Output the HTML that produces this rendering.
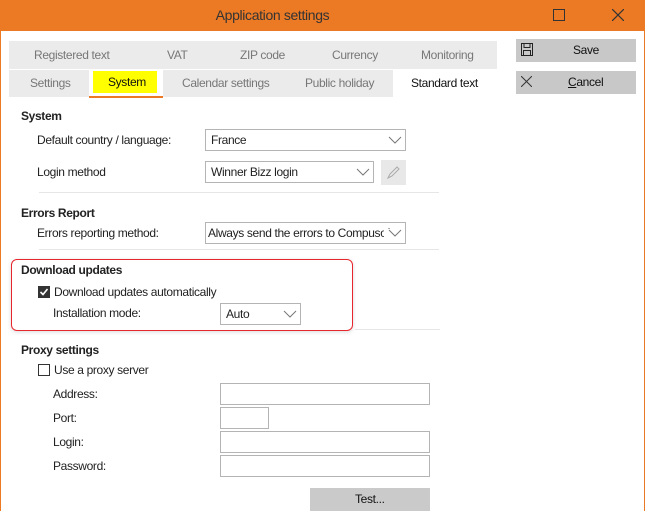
<!DOCTYPE html><html><head><style>
body{margin:0;width:645px;height:511px;overflow:hidden;background:#fff;font-family:"Liberation Sans",sans-serif;font-size:12px;letter-spacing:-0.35px;color:#222;position:relative}
.a{position:absolute}
.t{position:absolute;white-space:nowrap}
.dd{position:absolute;border:1px solid #b4b4b4;background:#fff;box-sizing:border-box;padding-left:5px;line-height:20px;font-size:12px;overflow:hidden;white-space:nowrap}
.dd svg{position:absolute;right:3px;top:6px}
.in{position:absolute;border:1px solid #b4b4b4;box-sizing:border-box;background:#fff}
.b{font-weight:bold}
.tab{position:absolute;color:#777;font-size:12px;white-space:nowrap}
.sep{position:absolute;height:1px;background:#e6e6e6}
</style></head><body>
<div class="a" style="left:0;top:0;width:645px;height:31px;background:#ec7a25"></div>
<div class="t" style="left:0;width:545px;top:7px;text-align:center;font-size:14px;color:#333">Application settings</div>
<div class="a" style="left:553px;top:9px;width:10px;height:10px;border:1px solid #333"></div>
<svg class="a" style="left:612px;top:9px" width="12" height="12"><path d="M0 0L12 12M12 0L0 12" stroke="#333" stroke-width="1.2"/></svg>
<div class="a" style="left:0;top:31px;width:1px;height:480px;background:#ec7a25"></div>
<div class="a" style="left:644px;top:31px;width:1px;height:480px;background:#ec7a25"></div>
<div class="a" style="left:9px;top:41px;width:488px;height:56px;background:#ebebeb"></div>
<div class="a" style="left:9px;top:69px;width:488px;height:1px;background:#fff"></div>
<div class="tab" style="left:34px;top:48px">Registered text</div>
<div class="tab" style="left:167px;top:48px">VAT</div>
<div class="tab" style="left:240px;top:48px">ZIP code</div>
<div class="tab" style="left:332px;top:48px">Currency</div>
<div class="tab" style="left:421px;top:48px">Monitoring</div>
<div class="tab" style="left:30px;top:76px">Settings</div>
<div class="a" style="left:89px;top:69px;width:74px;height:28px;background:#fff"></div>
<div class="a" style="left:93px;top:71px;width:64px;height:22px;background:#ffff00"></div>
<div class="t" style="left:108px;top:75px;color:#111">System</div>
<div class="a" style="left:89px;top:96px;width:74px;height:2px;background:#ec7a25"></div>
<div class="tab" style="left:182px;top:76px">Calendar settings</div>
<div class="tab" style="left:305px;top:76px">Public holiday</div>
<div class="a" style="left:393px;top:69px;width:104px;height:28px;background:#fff"></div>
<div class="t" style="left:411px;top:76px;color:#111">Standard text</div>
<div class="a" style="left:516px;top:39px;width:120px;height:23px;background:#c8c8c8"></div>
<svg class="a" style="left:521px;top:43px" width="12" height="13"><rect x=".5" y=".5" width="11" height="12" fill="none" stroke="#222"/><rect x="3" y=".5" width="6" height="4" fill="none" stroke="#222"/><rect x="2.5" y="7.5" width="7" height="5" fill="none" stroke="#222"/></svg>
<div class="t" style="left:573px;top:43px;color:#111">Save</div>
<div class="a" style="left:516px;top:71px;width:120px;height:23px;background:#c8c8c8"></div>
<svg class="a" style="left:521px;top:76px" width="11" height="11"><path d="M0 0L11 11M11 0L0 11" stroke="#333"/></svg>
<div class="t" style="left:568px;top:75px;color:#111"><u>C</u>ancel</div>
<div class="t b" style="left:21px;top:109px">System</div>
<div class="t" style="left:37px;top:133px">Default country / language:</div>
<div class="dd" style="left:205px;top:129px;width:201px;height:22px">France<svg width="14" height="8"><path d="M1 1L7 7L13 1" fill="none" stroke="#777"/></svg></div>
<div class="t" style="left:37px;top:165px">Login method</div>
<div class="dd" style="left:205px;top:161px;width:169px;height:22px">Winner Bizz login<svg width="14" height="8"><path d="M1 1L7 7L13 1" fill="none" stroke="#777"/></svg></div>
<div class="a" style="left:381px;top:160px;width:25px;height:25px;background:#e8e8e8"></div>
<svg class="a" style="left:387px;top:166px" width="13" height="13"><path d="M1 12L3 8L10 1L12 3L5 10Z" fill="none" stroke="#aaa"/></svg>
<div class="sep" style="left:39px;top:192px;width:400px"></div>
<div class="t b" style="left:21px;top:206px">Errors Report</div>
<div class="t" style="left:37px;top:226px">Errors reporting method:</div>
<div class="dd" style="left:205px;top:222px;width:201px;height:22px;padding-left:2px">Always send the errors to Compusof<svg width="16" height="8" style="background:#fff;padding-left:2px"><path d="M3 1L9 7L15 1" fill="none" stroke="#777"/></svg></div>
<div class="sep" style="left:39px;top:249px;width:400px"></div>
<div class="a" style="left:11px;top:259px;width:342px;height:72px;border:1.5px solid #e8262e;border-radius:6px;box-sizing:border-box;box-shadow:0 1px 4px rgba(0,0,0,.15)"></div>
<div class="t b" style="left:21px;top:263px">Download updates</div>
<div class="a" style="left:38px;top:286px;width:12px;height:12px;background:#333"></div>
<svg class="a" style="left:39px;top:287px" width="10" height="10"><path d="M1.5 5L4 7.5L8.5 2" fill="none" stroke="#fff" stroke-width="1.6"/></svg>
<div class="t" style="left:54px;top:285px">Download updates automatically</div>
<div class="t" style="left:53px;top:306px">Installation mode:</div>
<div class="dd" style="left:220px;top:303px;width:81px;height:22px">Auto<svg width="14" height="8"><path d="M1 1L7 7L13 1" fill="none" stroke="#777"/></svg></div>
<div class="sep" style="left:355px;top:329px;width:85px"></div>
<div class="t b" style="left:21px;top:343px">Proxy settings</div>
<div class="a" style="left:38px;top:364px;width:10px;height:10px;border:1px solid #333"></div>
<div class="t" style="left:54px;top:363px">Use a proxy server</div>
<div class="t" style="left:53px;top:387px">Address:</div>
<div class="in" style="left:220px;top:383px;width:210px;height:22px"></div>
<div class="t" style="left:53px;top:411px">Port:</div>
<div class="in" style="left:220px;top:407px;width:49px;height:22px"></div>
<div class="t" style="left:53px;top:435px">Login:</div>
<div class="in" style="left:220px;top:431px;width:210px;height:22px"></div>
<div class="t" style="left:53px;top:459px">Password:</div>
<div class="in" style="left:220px;top:455px;width:210px;height:22px"></div>
<div class="a" style="left:310px;top:488px;width:120px;height:23px;background:#cacaca"></div>
<div class="t" style="left:355px;top:492px;color:#111">Test...</div>
</body></html>
